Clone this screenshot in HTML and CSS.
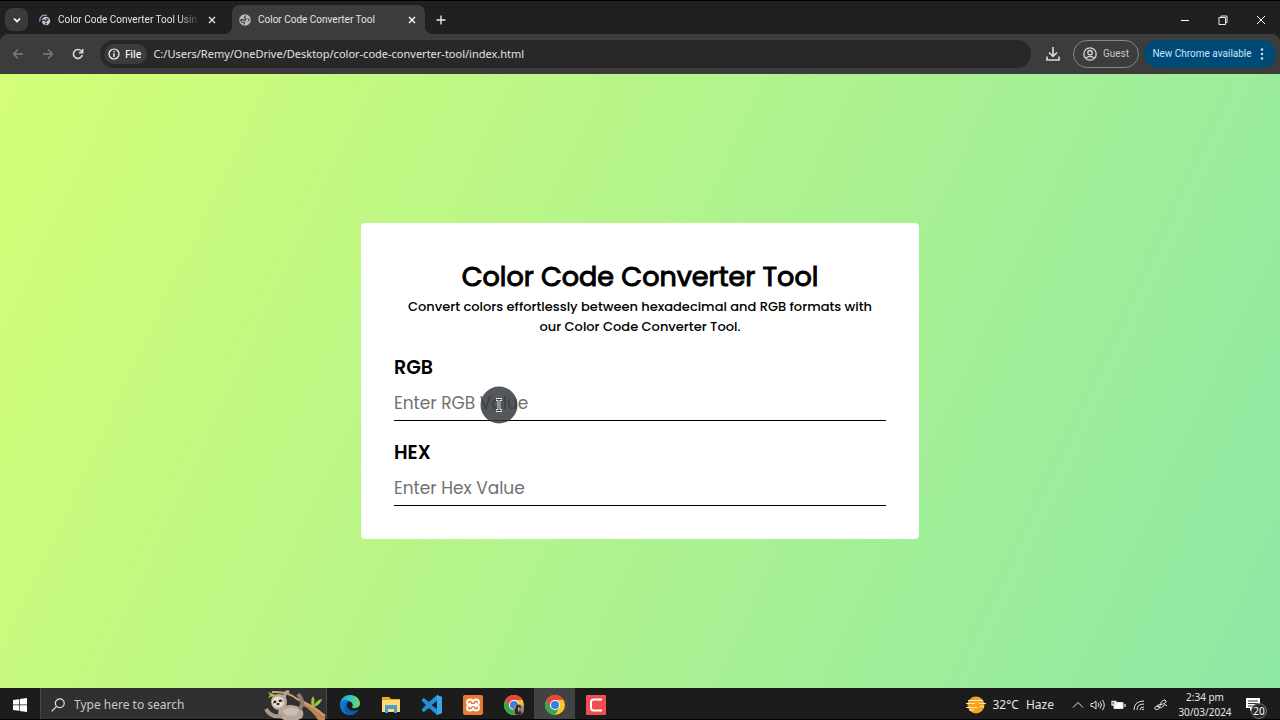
FILE: index.html
```html
<!DOCTYPE html>
<html lang="en">
<head>
<meta charset="utf-8">
<meta name="viewport" content="width=device-width, initial-scale=1">
<title>Color Code Converter Tool</title>
<link rel="stylesheet" href="styles.css">
</head>
<body>
<div class="desktop">
  <header class="browser">
    <div class="tab-strip">
      <button class="tab-search" aria-label="Search tabs"><svg width="10" height="10" viewBox="0 0 10 10"><path d="M2 3.5 5 6.5 8 3.5" fill="none" stroke="#fff" stroke-width="1.7"/></svg></button>
      <div class="tab">
        <svg class="favicon" width="12" height="12" viewBox="0 0 12 12"><path d="M1 7.500C0 3 4 0 8 1.500" fill="none" stroke="#8fa3c4" stroke-width="1.300"/><circle cx="7" cy="7" r="4.200" fill="#c4c9d2"/><path d="M3 7 5.500 6 7 7.500 9 5.500 7 4.500M6 10.500 7.500 9" stroke="#25282c" stroke-width="1.100" fill="none"/></svg>
        <span class="tab-title tab-title-fade">Color Code Converter Tool Usin</span>
        <button class="tab-close" aria-label="Close tab"><svg width="8" height="8" viewBox="0 0 8 8"><path d="M1 1 7 7M7 1 1 7" stroke="#e3e3e3" stroke-width="1.4"/></svg></button>
      </div>
      <div class="tab tab-active">
        <svg class="favicon" width="12" height="12" viewBox="0 0 12 12"><circle cx="6" cy="6" r="5.800" fill="#b8bbc2"/><path d="M6.500 1.500 5.500 3.500 7 5 6 6.500 3.500 5.500 1.500 6 3 8 5.500 8.500 5 10.500" fill="none" stroke="#3c3c3c" stroke-width="1.200"/><path d="M8.500 4.500 10.500 5.500 9 7.500" fill="none" stroke="#3c3c3c"/></svg>
        <span class="tab-title">Color Code Converter Tool</span>
        <button class="tab-close" aria-label="Close tab"><svg width="8" height="8" viewBox="0 0 8 8"><path d="M1 1 7 7M7 1 1 7" stroke="#fff" stroke-width="1.4"/></svg></button>
      </div>
      <button class="new-tab" aria-label="New tab"><svg width="10" height="10" viewBox="0 0 10 10"><path d="M5 .5V9.500M.5 5H9.500" stroke="#e8e8e8" stroke-width="1.4"/></svg></button>
      <div class="window-controls">
        <button aria-label="Minimize"><svg width="10" height="10" viewBox="0 0 10 10"><path d="M1 5.500H9" stroke="#fff"/></svg></button>
        <button aria-label="Restore"><svg width="10" height="10" viewBox="0 0 10 10"><path d="M1 2.500H7.500V9.500H1zM3 2.500V1H9V7.500H7.500" fill="none" stroke="#e8e8e8"/></svg></button>
        <button aria-label="Close"><svg width="10" height="10" viewBox="0 0 10 10"><path d="M1 1 9 9M9 1 1 9" stroke="#fff"/></svg></button>
      </div>
    </div>
    <div class="toolbar">
      <nav class="nav-buttons">
        <button aria-label="Back"><svg width="12" height="12" viewBox="0 0 12 12"><path d="M11 6H2M6 1.500 1.500 6 6 10.500" fill="none" stroke="#7e7e7e" stroke-width="1.300"/></svg></button>
        <button aria-label="Forward"><svg width="12" height="12" viewBox="0 0 12 12"><path d="M1 6H10M6 1.500 10.500 6 6 10.500" fill="none" stroke="#7e7e7e" stroke-width="1.300"/></svg></button>
        <button aria-label="Reload"><svg width="12" height="12" viewBox="0 0 12 12"><path d="M10.300 7A4.500 4.500 0 1 1 9.400 3.100L10.500 4.300M10.700 1V4.700H7" fill="none" stroke="#dedede" stroke-width="1.500"/></svg></button>
      </nav>
      <div class="omnibox">
        <button class="file-chip"><svg width="12" height="12" viewBox="0 0 12 12"><circle cx="6" cy="6" r="5" fill="none" stroke="#fff" stroke-width="1.200"/><path d="M6 5.300V9M6 3V4.300" stroke="#fff" stroke-width="1.300"/></svg>File</button>
        <input class="address" aria-label="Address" value="C:/Users/Remy/OneDrive/Desktop/color-code-converter-tool/index.html">
      </div>
      <button class="download" aria-label="Downloads"><svg width="14" height="14" viewBox="0 0 14 14"><path d="M7 0V9M3 5.500 7 9.300 11 5.500M1 9.500V13H13V9.500" fill="none" stroke="#dadada" stroke-width="1.600"/></svg></button>
      <button class="guest"><svg width="14" height="14" viewBox="0 0 14 14"><circle cx="7" cy="7" r="6.200" fill="none" stroke="#d8d8d8" stroke-width="1.300"/><circle cx="7" cy="5.700" r="2.200" fill="none" stroke="#d8d8d8" stroke-width="1.300"/><path d="M3 11Q7 7.600 11 11" fill="none" stroke="#d8d8d8" stroke-width="1.300"/></svg>Guest</button>
      <button class="update">New Chrome available<svg width="4" height="12" viewBox="0 0 4 12" fill="#d3e8fb"><circle cx="2" cy="1.500" r="1.200"/><circle cx="2" cy="6" r="1.200"/><circle cx="2" cy="10.500" r="1.200"/></svg></button>
    </div>
  </header>

  <main class="page">
    <form class="card">
      <h1 class="title">Color Code Converter Tool</h1>
      <p class="intro">Convert colors effortlessly between hexadecimal and RGB formats with our Color Code Converter Tool.</p>
      <div class="field">
        <label for="rgb">RGB</label>
        <input id="rgb" type="text" placeholder="Enter RGB Value">
        <svg class="pointer" width="38" height="38" viewBox="0 0 38 38"><circle cx="19" cy="19" r="18.500" fill="#33373b" fill-opacity=".84"/><path d="M16 13.500H22M19 14V24M16 24.500H22" fill="none" stroke="#e6e6e6" stroke-width="3"/><path d="M16.500 13.500H21.500M19 14V24M16.500 24.500H21.500" fill="none" stroke="#34373b"/></svg>
      </div>
      <div class="field">
        <label for="hex">HEX</label>
        <input id="hex" type="text" placeholder="Enter Hex Value">
      </div>
    </form>
  </main>

  <footer class="taskbar">
    <button class="start" aria-label="Start"><svg width="14" height="14" viewBox="0 0 14 14" fill="#fff"><path d="M0 2 6 1.200V6.600H0zM6.700 1 14 0V6.600H6.700zM0 7.300H6V12.800L0 12zM6.700 7.300H14V14L6.700 13z"/></svg></button>
    <div class="search">
      <svg width="14" height="14" viewBox="0 0 14 14"><circle cx="8.800" cy="5.200" r="4.400" fill="none" stroke="#e4e4e4" stroke-width="1.200"/><path d="M5.600 8.400 .6 13.400" stroke="#e4e4e4" stroke-width="1.300"/></svg>
      <input type="search" aria-label="Search" placeholder="Type here to search">
      <svg class="sloth" width="62" height="30" viewBox="0 0 62 30"><path d="M39 11Q52 18 61 25V30H54Q48 20 38 15z" fill="#b98654"/><path d="M8 2Q24 1 33 9 48 15 61 26" fill="none" stroke="#cf9f70" stroke-width="2"/><path d="M48 16Q46 11 49 6 52 11 49 16 54 9 58 9 57 14 50 17zM12 5 4 2 6 5 4 8 9 6 7 10 13 6z" fill="#9bc83b"/><path d="M15 19Q24 12 35 17 42 22 38 28L34 30H20Q12 27 15 19z" fill="#b8a79b"/><path d="M19 20Q28 15 35 20 34 26 26 26 19 25 19 20z" fill="#cbbdb1"/><path d="M18 26Q7 28 2 19" fill="none" stroke="#a9988c" stroke-width="4"/><path d="M35 19Q42 14 34 4" fill="none" stroke="#927b6e" stroke-width="4"/><path d="M20 12 21 3 25 1" fill="none" stroke="#b6a497" stroke-width="3"/><circle cx="15" cy="12" r="8" fill="#b9a99d"/><ellipse cx="14" cy="12" rx="6" ry="5.500" fill="#e9ddd0"/><path d="M9 14Q9 9 13 11zM14 11Q18 7 19 12z" fill="#665149"/><circle cx="11" cy="12" r="1"/><circle cx="16" cy="11" r="1"/><ellipse cx="14" cy="14" rx="1.700" ry="1.200" fill="#493b38"/></svg>
    </div>
    <nav class="apps" aria-label="Applications">
      <button class="app" aria-label="Edge"><svg width="20" height="20" viewBox="0 0 20 20"><defs><linearGradient id="edge" x2="1"><stop stop-color="#179ee3"/><stop offset=".5" stop-color="#35c7c7"/><stop offset="1" stop-color="#71dc58"/></linearGradient></defs><path d="M0 9C1 3 5 0 10 0 16 0 20 4 20 8.500 20 13 14 14 12 12.500 14 10 12 6 8 6 3 6 1 11 3 15 1 13 0 11 0 9z" fill="url(#edge)"/><path d="M0 10C0 5 6 4 9 6 4 9 7 16 13 17L16 18C8 23 0 18 0 10z" fill="#1175cf"/><path d="M9 7C5 9 7 15 13 16 16 16.400 18 15 19 14 17 18 13 20 10 20 3 18 3 9 9 7z" fill="#0b5cac"/></svg></button>
      <button class="app" aria-label="File Explorer"><svg width="20" height="18" viewBox="0 0 20 18"><path d="M1 1H8L10 3H19V16H1z" fill="#eca728"/><path d="M1 4H19V16H1z" fill="#ffda73"/><path d="M4 9H16V17H13V13H7V17H4z" fill="#4b9ed1"/></svg></button>
      <button class="app" aria-label="Visual Studio Code"><svg width="20" height="20" viewBox="0 0 20 20"><path d="M15 0 20 2V18L15 20 7 13 2 17 0 16V14L4 10 0 6V4L2 3 7 7zM15 6 9.500 10 15 14z" fill="#238fd6" fill-rule="evenodd"/><path d="M15 0 20 2V18L15 20z" fill="#3ba5e9"/></svg></button>
      <button class="app" aria-label="XAMPP"><svg width="20" height="20" viewBox="0 0 20 20"><rect width="20" height="20" rx="2" fill="#e77a35"/><path d="M7 4.500Q4 4.500 4 7.300 4 10 7 10 4 10 4 12.700 4 15.500 7 15.500 10 15.500 10 12.500 10 15.500 13 15.500 16 15.500 16 12.700 16 10 13 10 16 10 16 7.300 16 4.500 13 4.500 10 4.500 10 7.500 10 4.500 7 4.500zM7 7.500V8.500Q7 10 8.500 10H11.500Q13 10 13 8.500V7.500M7 12.500Q7 10 10 10 13 10 13 12.500" fill="none" stroke="#fff" stroke-width="1.900"/></svg></button>
      <button class="app" aria-label="Chrome, personal profile"><svg width="20" height="20" viewBox="0 0 20 20"><circle cx="10" cy="10" r="10" fill="#fbc22c"/><path d="M1.340 5A10 10 0 0 0 10 20L14.300 12.500 10 10 5.700 12.500z" fill="#31a853"/><path d="M1.340 5A10 10 0 0 1 18.660 5H10L5.700 12.500z" fill="#ed4538"/><circle cx="10" cy="10" r="5" fill="#fff"/><circle cx="10" cy="10" r="4" fill="#387ce6"/><circle cx="14.500" cy="14.500" r="5.500" fill="#958b83"/><path d="M11 19 10.500 15 13 9.500 17 11 16 15 18 18.500 15 20z" fill="#2e2929"/><path d="M14 12 16 13 15 17 14 16z" fill="#c0a797"/></svg></button>
      <button class="app app-active" aria-label="Chrome"><svg width="20" height="20" viewBox="0 0 20 20"><circle cx="10" cy="10" r="10" fill="#fbc22c"/><path d="M1.340 5A10 10 0 0 0 10 20L14.300 12.500 10 10 5.700 12.500z" fill="#31a853"/><path d="M1.340 5A10 10 0 0 1 18.660 5H10L5.700 12.500z" fill="#ed4538"/><circle cx="10" cy="10" r="5" fill="#fff"/><circle cx="10" cy="10" r="4" fill="#387ce6"/></svg></button>
      <button class="app" aria-label="Camtasia"><svg width="20" height="20" viewBox="0 0 20 20"><rect width="20" height="20" rx="1" fill="#f34d51"/><path d="M16 4.500H8Q5 4.500 5 7V13Q5 15.500 8 15.500H16" fill="none" stroke="#fff" stroke-width="2"/></svg></button>
    </nav>
    <div class="tray">
      <button class="weather"><svg width="20" height="18" viewBox="0 0 20 18"><circle cx="10" cy="9" r="8.500" fill="#f6a522"/><path d="M2 4.500H17M0 7.500H9M13 7.500H20M0 11.500H11M14 10.500H18M3 14H8" stroke="#ffe6aa"/></svg><span>32°C</span><span>Haze</span></button>
      <button class="status" aria-label="System tray"><svg width="98" height="16" viewBox="0 0 98 16" fill="none" stroke="#e4e4e4"><path d="M2 10.500 7 5.500 12 10.500"/><path d="M20 6.500H22L25 4V12L22 9.500H20zM27 6Q29 8 27 10M29 4.500Q32 8 29 11.500M31.500 3Q35 8 31.500 13"/><path d="M43 5.500H52V11.500H43z" fill="#fff"/><path d="M41 4.500H45V8H41zM54 7V10" stroke-width="1.300"/><path d="M63 13Q63 4 73 4M66 13Q66 7 73 7M69 13Q69 10 73 10"/><circle cx="72" cy="12.500" r=".5"/><path d="M88 9Q83 9 84 12 88 14 89 9 90 3 94 3 97 5 92 7 84 8 87 10 91 12 92 9 94 6 96 9"/></svg></button>
      <time class="clock" datetime="2024-03-30T14:34"><span>2:34 pm</span><span>30/03/2024</span></time>
      <button class="notifications" aria-label="20 notifications"><svg width="14" height="15" viewBox="0 0 14 15"><path d="M0 1H14V11H8L4 14V11H0z" fill="#fff"/><path d="M2 4H12M2 6.500H12M2 9H8" stroke="#333"/></svg><span class="badge">20</span></button>
    </div>
  </footer>
</div>
</body>
</html>
```
FILE: styles.css
```css
* { box-sizing: border-box; }
body { margin: 0; font-family: "Segoe UI", "Noto Sans", sans-serif; font-size: 11px; }
button, input { font: inherit; border: 0; padding: 0; margin: 0; background: none; color: inherit; }
button { display: flex; align-items: center; justify-content: center; white-space: nowrap; }
svg { flex: none; display: block; }
input { min-width: 0; outline: 0; }

.desktop { min-height: 100vh; display: flex; flex-direction: column; }

.browser { background: #202020; color: #e3e3e3; border-top: 1px solid #000; }
.tab-strip { display: flex; align-items: center; height: 33px; padding: 4px 0 0 5px; }
.tab-search { width: 23px; height: 23px; border-radius: 8px; background: #3b3b3b; }
.tab { display: flex; align-items: center; gap: 7px; width: 193px; height: 29px; padding: 0 8px 0 7px; margin-left: 4px; font-family: Roboto, sans-serif; font-size: 10px; }
.tab-active { background: #3c3c3c; border-radius: 8px 8px 0 0; position: relative; margin-left: 7px; }
.tab-active::before, .tab-active::after { content: ""; position: absolute; bottom: 0; width: 8px; height: 8px; }
.tab-active::before { right: 100%; background: radial-gradient(circle at 0 0, transparent 8px, #3c3c3c 8px); }
.tab-active::after { left: 100%; background: radial-gradient(circle at 100% 0, transparent 8px, #3c3c3c 8px); }
.tab-title { flex: 1; white-space: nowrap; }
.tab-title-fade { -webkit-mask-image: linear-gradient(90deg, #000 85%, transparent); mask-image: linear-gradient(90deg, #000 85%, transparent); }
.tab-close { width: 10px; height: 16px; }
.new-tab { width: 24px; height: 24px; margin-left: 4px; }
.window-controls { display: flex; margin-left: auto; }
.window-controls button { width: 38px; height: 24px; }

.toolbar { display: flex; align-items: center; height: 40px; padding: 0 4px 1px 12px; background: #3c3c3c; border-radius: 8px 8px 0 0; }
.nav-buttons { display: flex; gap: 18px; margin-right: 16px; }
.nav-buttons button { width: 12px; height: 24px; }
.omnibox { display: flex; align-items: center; gap: 6px; flex: 1; height: 28px; padding: 0 4px; border-radius: 14px; background: #282828; }
.file-chip { gap: 5px; height: 20px; padding: 0 6px 0 4px; border-radius: 10px; background: #3c3c3c; color: #fff; font-size: 10px; font-weight: 500; }
.address { flex: 1; }
.download { width: 40px; height: 28px; margin-left: 2px; }
.guest { gap: 6px; width: 66px; height: 28px; border: 1px solid #858585; border-radius: 14px; font-family: Roboto, sans-serif; font-size: 10px; color: #c7c7c7; }
.update { gap: 8px; width: 132px; height: 28px; margin-left: 5px; padding-right: 4px; border-radius: 14px; background: #004a77; color: #c2e7ff; font-family: Roboto, sans-serif; font-size: 10px; }

.page { flex: 1; display: grid; place-items: center; padding: 16px; background: linear-gradient(115deg, #d4fe76, #8de8a5); font-family: Poppins, Inter, sans-serif; color: #000; }
.card { width: 100%; max-width: 558px; padding: 36px 33px 33px; border-radius: 4px; background: #fff; }
.title { margin: 0; font-size: 27px; line-height: 36px; font-weight: 400; text-align: center; -webkit-text-stroke: 1px #000; }
.intro { margin: 2px 0 17px; padding: 0 7px; font-size: 13px; line-height: 20px; font-weight: 500; text-align: center; }
.field { position: relative; display: flex; flex-direction: column; }
.field + .field { margin-top: 18px; }
.field label { font-size: 19px; line-height: 28px; font-weight: 600; }
.field input { height: 39px; padding-top: 3px; border-bottom: 1px solid #000; font-size: 17px; }
.field input::placeholder { color: #707070; opacity: 1; }
.pointer { position: absolute; left: 86px; top: 32px; pointer-events: none; }

.taskbar { display: flex; align-items: stretch; height: 32px; border-bottom: 1px solid #000; background: #1c1c1c; color: #e4e4e4; }
.start, .app, .tray, .search { padding-top: 2px; }
.start { width: 40px; }
.search { display: flex; align-items: center; width: 287px; padding-left: 10px; gap: 9px; background: #303030; border-left: 1px solid #484848; border-right: 1px solid #484848; }
.search input { flex: 1; font-size: 12px; }
.search input::placeholder { color: #c9c9c9; opacity: 1; }
.apps { display: flex; padding-left: 2px; }
.app { width: 41px; }
.app-active { background: #424242; }
.tray { display: flex; align-items: center; margin-left: auto; padding-right: 14px; }
.weather { gap: 7px; margin-right: 17px; font-size: 12px; }
.status { margin-right: 7px; }
.clock { display: flex; flex-direction: column; align-items: center; width: 58px; font-size: 10px; line-height: 15px; }
.notifications { position: relative; width: 20px; height: 24px; margin-left: 12px; justify-content: flex-start; }
.badge { position: absolute; left: 5px; top: 10px; width: 16px; height: 16px; border: 1px solid #777; border-radius: 8px; background: #292929; color: #fff; font-size: 10px; line-height: 14px; text-align: center; }
```
